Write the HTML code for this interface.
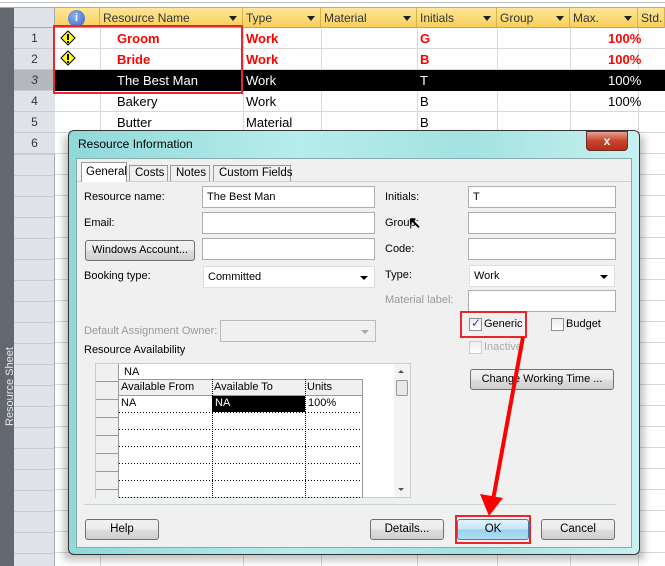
<!DOCTYPE html>
<html><head><meta charset="utf-8"><style>
*{box-sizing:border-box;margin:0;padding:0}
body{width:665px;height:566px;overflow:hidden;background:#fff;font-family:"Liberation Sans",sans-serif;position:relative}
.a{position:absolute}
.hd{position:absolute;top:8px;height:20px;background:linear-gradient(#fde79a,#f9cf5a);border-right:1px solid #d9b04a;border-bottom:1px solid #c9a44a;font-size:12px;color:#333;padding:3px 3px;white-space:nowrap}
.hd b{position:absolute;right:5px;top:8px;border-left:4px solid transparent;border-right:4px solid transparent;border-top:5px solid #222}
.rn{position:absolute;left:14px;width:41px;height:21px;border-bottom:1px solid #c8ccd2;background:#dfe3e8;font-size:12px;color:#333;text-align:center;line-height:21px}
.c{position:absolute;font-size:13px;line-height:21px;white-space:nowrap}
.red{color:#f00;font-weight:bold}
.lbl{position:absolute;font-size:11px;color:#000;white-space:nowrap}
.inp{position:absolute;background:#fff;border:1px solid #abadb3;font-size:11px;padding:4px 4px;height:22px;white-space:nowrap}
.btn{position:absolute;height:21px;border:1px solid #707070;border-radius:3px;background:linear-gradient(#f2f2f2,#ebebeb 50%,#dddddd 51%,#cfcfcf);font-size:11.5px;text-align:center;line-height:19px;white-space:nowrap}
.cb{position:absolute;width:13px;height:13px;border:1px solid #8e8f8f;background:linear-gradient(#eee,#fff)}
.sel b{position:absolute;right:6px;top:9px;border-left:4px solid transparent;border-right:4px solid transparent;border-top:4px solid #000}
.tab{position:absolute;white-space:nowrap;font-size:11.5px;border:1px solid #999;border-bottom:none}
</style></head><body>
<div class="a" style="left:0;top:0;width:665px;height:8px;background:#fff;border-bottom:1px solid #aaa"></div>
<div class="a" style="left:0;top:2px;width:665px;height:1px;background:#c0c0c0"></div>
<div class="a" style="left:0;top:8px;width:14px;height:558px;background:#636870"></div>
<div class="a" style="left:-30px;top:380px;width:80px;transform:rotate(-90deg);color:#e8e8e8;font-size:11px;white-space:nowrap">Resource Sheet</div>
<div class="a" style="left:14px;top:8px;width:41px;height:558px;background:#dfe3e8;border-right:1px solid #a8acb2;background-image:repeating-linear-gradient(to bottom,transparent 0 20px,#c8ccd2 20px 21px)"></div>
<div class="a" style="left:55px;top:28px;width:610px;height:538px;background:repeating-linear-gradient(to bottom,transparent 0 20px,#d8d8d8 20px 21px)"></div>
<div class="a" style="left:100px;top:28px;width:1px;height:538px;background:#d8d8d8"></div>
<div class="a" style="left:243px;top:28px;width:1px;height:538px;background:#d8d8d8"></div>
<div class="a" style="left:321px;top:28px;width:1px;height:538px;background:#d8d8d8"></div>
<div class="a" style="left:417px;top:28px;width:1px;height:538px;background:#d8d8d8"></div>
<div class="a" style="left:497px;top:28px;width:1px;height:538px;background:#d8d8d8"></div>
<div class="a" style="left:570px;top:28px;width:1px;height:538px;background:#d8d8d8"></div>
<div class="a" style="left:638px;top:28px;width:1px;height:538px;background:#d8d8d8"></div>
<div class="hd" style="left:14px;width:41px;background:#dfe3e8;border-color:#a8acb2"></div>
<div class="hd" style="left:55px;width:45px"><span class="a" style="left:13px;top:2px;width:17px;height:17px;border-radius:50%;background:radial-gradient(circle at 40% 35%,#8fb2ee,#2f5fc4);color:#fff;font-weight:bold;font-size:11px;text-align:center;line-height:17px">i</span></div>
<div class="hd" style="left:100px;width:143px">Resource Name<b></b></div>
<div class="hd" style="left:243px;width:78px">Type<b></b></div>
<div class="hd" style="left:321px;width:96px">Material<b></b></div>
<div class="hd" style="left:417px;width:80px">Initials<b></b></div>
<div class="hd" style="left:497px;width:73px">Group<b></b></div>
<div class="hd" style="left:570px;width:68px">Max.<b></b></div>
<div class="hd" style="left:638px;width:27px">Std.</div>
<div class="rn" style="top:28px">1</div><div class="rn" style="top:49px">2</div>
<div class="rn" style="top:70px;background:#b4b8bd;font-style:italic">3</div>
<div class="rn" style="top:91px">4</div><div class="rn" style="top:112px">5</div><div class="rn" style="top:133px">6</div>
<div class="a" style="left:55px;top:70px;width:610px;height:21px;background:#000"></div>
<svg class="a" style="left:60px;top:30px" width="16" height="36"><g><polygon points="8,1 15,8 8,15 1,8" fill="#ff0" stroke="#000"/><rect x="7" y="4" width="2" height="6"/><rect x="7" y="11" width="2" height="2"/></g><g transform="translate(0,20)"><polygon points="8,1 15,8 8,15 1,8" fill="#ff0" stroke="#000"/><rect x="7" y="4" width="2" height="6"/><rect x="7" y="11" width="2" height="2"/></g></svg>
<div class="c red" style="left:117px;top:28px">Groom</div><div class="c red" style="left:246px;top:28px">Work</div><div class="c red" style="left:420px;top:28px">G</div><div class="c red" style="left:608px;top:28px">100%</div>
<div class="c red" style="left:117px;top:49px">Bride</div><div class="c red" style="left:246px;top:49px">Work</div><div class="c red" style="left:420px;top:49px">B</div><div class="c red" style="left:608px;top:49px">100%</div>
<div class="c" style="left:117px;top:70px;color:#fff">The Best Man</div><div class="c" style="left:246px;top:70px;color:#fff">Work</div><div class="c" style="left:420px;top:70px;color:#fff">T</div><div class="c" style="left:608px;top:70px;color:#fff">100%</div>
<div class="c" style="left:117px;top:91px">Bakery</div><div class="c" style="left:246px;top:91px">Work</div><div class="c" style="left:420px;top:91px">B</div><div class="c" style="left:608px;top:91px">100%</div>
<div class="c" style="left:117px;top:112px">Butter</div><div class="c" style="left:246px;top:112px">Material</div><div class="c" style="left:420px;top:112px">B</div>
<div class="a" style="left:53px;top:25px;width:190px;height:69px;border:2px solid #e8262b"></div>
<!-- dialog -->
<div class="a" style="left:64px;top:136px;width:580px;height:424px;background:rgba(0,0,0,.25);filter:blur(4px)"></div>
<div class="a" style="left:68px;top:130px;width:572px;height:425px;border:1px solid #333;border-radius:6px;background:linear-gradient(90deg,#8fd9d9,#b7ecec 40%,#a3e2e2 70%,#c8f0f0)"></div>
<div class="a" style="left:78px;top:137px;font-size:12px;color:#000">Resource Information</div>
<div class="a" style="left:586px;top:131px;width:42px;height:20px;border:1px solid #6b2a2a;border-radius:0 0 4px 4px;background:linear-gradient(#e8a18f,#c7432c 50%,#b62d18);color:#fff;font-weight:bold;font-size:12px;text-align:center;line-height:18px">x</div>
<div class="a" style="left:76px;top:158px;width:556px;height:390px;background:#f0f0f0;border:1px solid #8aa"></div>
<div class="a" style="left:77px;top:181px;width:554px;height:1px;background:#d0d0d0"></div>
<div class="tab" style="left:81px;top:162px;width:46px;height:20px;background:#fff;padding:3px 4px">General</div>
<div class="tab" style="left:129px;top:165px;width:39px;height:16px;background:#f0f0f0;padding:1px 5px">Costs</div>
<div class="tab" style="left:170px;top:165px;width:40px;height:16px;background:#f0f0f0;padding:1px 5px">Notes</div>
<div class="tab" style="left:213px;top:165px;width:78px;height:16px;background:#f0f0f0;padding:1px 5px">Custom Fields</div>
<div class="lbl" style="left:84px;top:191px">Resource name:</div>
<div class="inp" style="left:202px;top:186px;width:173px">The Best Man</div>
<div class="lbl" style="left:84px;top:217px">Email:</div>
<div class="inp" style="left:202px;top:212px;width:173px"></div>
<div class="btn" style="left:85px;top:240px;width:110px;font-size:11px">Windows Account...</div>
<div class="inp" style="left:202px;top:238px;width:173px"></div>
<div class="lbl" style="left:84px;top:270px">Booking type:</div>
<div class="inp sel" style="left:203px;top:266px;width:172px;border-color:#ddd">Committed<b></b></div>
<div class="lbl" style="left:84px;top:325px;color:#999">Default Assignment Owner:</div>
<div class="inp sel" style="left:220px;top:320px;width:156px;background:#f0f0f0;border-color:#bbb"><b style="border-top-color:#aaa"></b></div>
<div class="lbl" style="left:84px;top:344px">Resource Availability</div>
<div class="lbl" style="left:385px;top:191px">Initials:</div>
<div class="inp" style="left:468px;top:186px;width:148px">T</div>
<div class="lbl" style="left:385px;top:217px">Group:</div>
<div class="a" style="left:408px;top:213px;font-size:16px;font-weight:bold">&#8598;</div>
<div class="inp" style="left:468px;top:212px;width:148px"></div>
<div class="lbl" style="left:385px;top:243px">Code:</div>
<div class="inp" style="left:468px;top:238px;width:148px"></div>
<div class="lbl" style="left:385px;top:269px">Type:</div>
<div class="inp sel" style="left:469px;top:265px;width:146px;border-color:#ddd">Work<b></b></div>
<div class="lbl" style="left:385px;top:294px;color:#999">Material label:</div>
<div class="inp" style="left:468px;top:290px;width:148px"></div>
<div class="cb" style="left:469px;top:318px"><span class="a" style="left:1px;top:-3px;font-size:12px;color:#2a4a9a">&#10003;</span></div>
<div class="lbl" style="left:484px;top:318px">Generic</div>
<div class="a" style="left:460px;top:311px;width:67px;height:27px;border:2px solid #e8262b"></div>
<div class="cb" style="left:551px;top:318px"></div>
<div class="lbl" style="left:566px;top:318px">Budget</div>
<div class="cb" style="left:469px;top:341px;border-color:#ccc"></div>
<div class="lbl" style="left:484px;top:341px;color:#aaa">Inactive</div>
<div class="btn" style="left:470px;top:369px;width:144px;font-size:11px">Change Working Time ...</div>
<!-- availability grid -->
<div class="a" style="left:95px;top:363px;width:316px;height:135px;background:#fff;border:1px solid #ccc"></div>
<div class="a" style="left:96px;top:364px;width:23px;height:134px;background:#f0f0f0;border-right:1px solid #999;background-image:repeating-linear-gradient(to bottom,transparent 0 17px,#999 17px 18px)"></div>
<div class="lbl" style="left:124px;top:366px">NA</div>
<div class="a" style="left:119px;top:379px;width:243px;height:17px;background:#f0f0f0;border-bottom:1px solid #999;border-top:1px solid #999"></div>
<div class="a" style="left:119px;top:396px;width:243px;height:102px;background-image:repeating-linear-gradient(to right,#000 0 1px,transparent 1px 3px);-webkit-mask:repeating-linear-gradient(to bottom,transparent 0 16px,#000 16px 17px);mask:repeating-linear-gradient(to bottom,transparent 0 16px,#000 16px 17px)"></div>
<div class="a" style="left:212px;top:379px;width:1px;height:119px;border-left:1px dotted #000"></div>
<div class="a" style="left:305px;top:379px;width:1px;height:119px;border-left:1px dotted #000"></div>
<div class="a" style="left:362px;top:379px;width:1px;height:119px;background:#999"></div>
<div class="lbl" style="left:121px;top:381px">Available From</div>
<div class="lbl" style="left:214px;top:381px">Available To</div>
<div class="lbl" style="left:307px;top:381px">Units</div>
<div class="lbl" style="left:121px;top:397px">NA</div>
<div class="a" style="left:212px;top:396px;width:93px;height:16px;background:#000"></div>
<div class="lbl" style="left:215px;top:397px;color:#fff">NA</div>
<div class="lbl" style="left:308px;top:397px">100%</div>
<div class="a" style="left:394px;top:364px;width:16px;height:133px;background:#f3f3f3"></div>
<div class="a" style="left:398px;top:370px;border-left:3px solid transparent;border-right:3px solid transparent;border-bottom:3px solid #555"></div>
<div class="a" style="left:398px;top:488px;border-left:3px solid transparent;border-right:3px solid transparent;border-top:3px solid #555"></div>
<div class="a" style="left:396px;top:380px;width:12px;height:16px;border:1px solid #999;border-radius:2px;background:#e8e8e8"></div>
<div class="a" style="left:84px;top:504px;width:532px;height:1px;background:#c8d4dc"></div>
<div class="btn" style="left:85px;top:519px;width:74px">Help</div>
<div class="btn" style="left:370px;top:519px;width:74px">Details...</div>
<div class="btn" style="left:457px;top:519px;width:72px;border-color:#3c7fb1;background:linear-gradient(#e5f4fc,#c4e5f6 50%,#98d1ef 51%,#b3ddf3)">OK</div>
<div class="btn" style="left:541px;top:519px;width:74px">Cancel</div>
<div class="a" style="left:455px;top:515px;width:76px;height:29px;border:2px solid #e8262b"></div>
<svg class="a" style="left:0;top:0" width="665" height="566"><line x1="523" y1="337" x2="493" y2="500" stroke="#f00" stroke-width="4"/><polygon points="480,494 503,498 489,516" fill="#f00"/></svg>
</body></html>
